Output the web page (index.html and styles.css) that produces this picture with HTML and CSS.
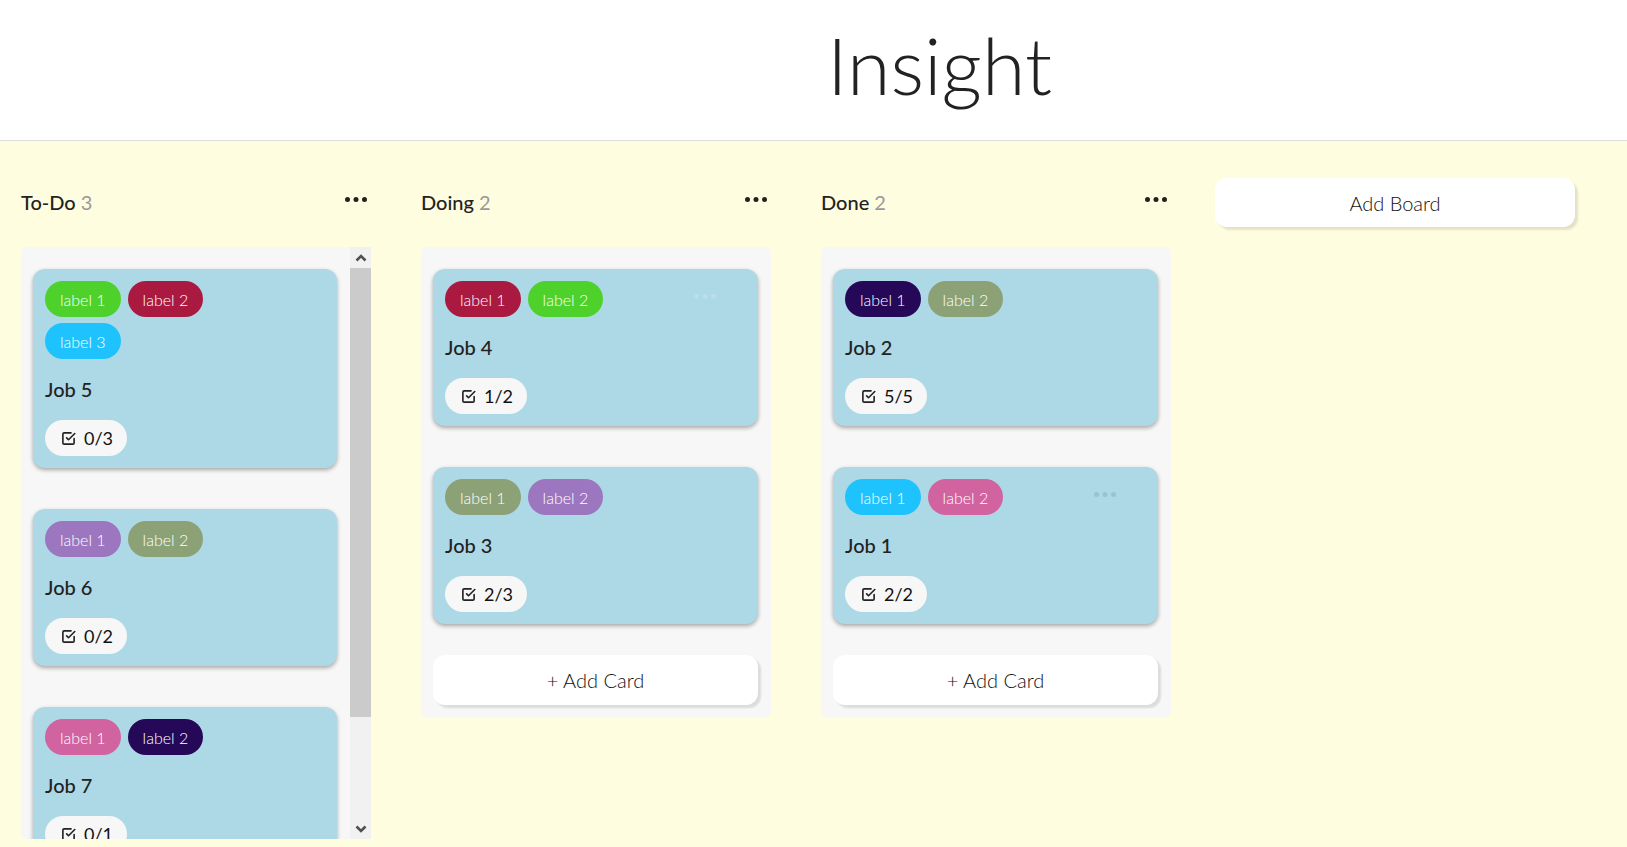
FILE: index.html
```html
<!DOCTYPE html>
<html lang="en">
<head>
<meta charset="utf-8">
<title>Insight</title>
<link rel="stylesheet" href="styles.css">
</head>
<body>
<header class="topbar">
  <h1 class="brand">Insight</h1>
</header>
<main class="board">
  <section class="column">
    <div class="column-head">
      <h2 class="column-title">To-Do <span class="count">3</span></h2>
      <button class="more" aria-label="More"><svg width="22" height="5" viewBox="0 0 22 5"><circle cx="2.5" cy="2.5" r="2.5"/><circle cx="11" cy="2.5" r="2.5"/><circle cx="19.5" cy="2.5" r="2.5"/></svg></button>
    </div>
    <div class="column-body scrolling">
      <div class="scroll-view">
        <div class="cards">
          <article class="card">
            <div class="card-top">
              <div class="labels">
                <span class="label c-green">label 1</span>
                <span class="label c-crimson">label 2</span>
                <span class="label c-sky">label 3</span>
              </div>
              <button class="card-more is-hidden" aria-label="Card menu"><svg width="22" height="5" viewBox="0 0 22 5"><circle cx="2.5" cy="2.5" r="2.5"/><circle cx="11" cy="2.5" r="2.5"/><circle cx="19.5" cy="2.5" r="2.5"/></svg></button>
            </div>
            <h3 class="card-title">Job 5</h3>
            <span class="checklist"><svg class="check-icon" width="15" height="15" viewBox="0 0 24 24"><polyline points="9 11 12 14 22 4"/><path d="M21 12v7a2 2 0 0 1-2 2H5a2 2 0 0 1-2-2V5a2 2 0 0 1 2-2h11"/></svg>0/3</span>
          </article>
          <article class="card">
            <div class="card-top">
              <div class="labels">
                <span class="label c-purple">label 1</span>
                <span class="label c-sage">label 2</span>
              </div>
              <button class="card-more is-hidden" aria-label="Card menu"><svg width="22" height="5" viewBox="0 0 22 5"><circle cx="2.5" cy="2.5" r="2.5"/><circle cx="11" cy="2.5" r="2.5"/><circle cx="19.5" cy="2.5" r="2.5"/></svg></button>
            </div>
            <h3 class="card-title">Job 6</h3>
            <span class="checklist"><svg class="check-icon" width="15" height="15" viewBox="0 0 24 24"><polyline points="9 11 12 14 22 4"/><path d="M21 12v7a2 2 0 0 1-2 2H5a2 2 0 0 1-2-2V5a2 2 0 0 1 2-2h11"/></svg>0/2</span>
          </article>
          <article class="card">
            <div class="card-top">
              <div class="labels">
                <span class="label c-pink">label 1</span>
                <span class="label c-night">label 2</span>
              </div>
              <button class="card-more is-hidden" aria-label="Card menu"><svg width="22" height="5" viewBox="0 0 22 5"><circle cx="2.5" cy="2.5" r="2.5"/><circle cx="11" cy="2.5" r="2.5"/><circle cx="19.5" cy="2.5" r="2.5"/></svg></button>
            </div>
            <h3 class="card-title">Job 7</h3>
            <span class="checklist"><svg class="check-icon" width="15" height="15" viewBox="0 0 24 24"><polyline points="9 11 12 14 22 4"/><path d="M21 12v7a2 2 0 0 1-2 2H5a2 2 0 0 1-2-2V5a2 2 0 0 1 2-2h11"/></svg>0/1</span>
          </article>
        </div>
        <button class="add-card">+ Add Card</button>
      </div>
      <div class="scrollbar" aria-hidden="true">
        <span class="sb-btn"><svg width="12" height="8" viewBox="0 0 12 8"><path d="M1.5 6.5L6 2l4.5 4.5"/></svg></span>
        <span class="sb-track"><span class="sb-thumb"></span></span>
        <span class="sb-btn"><svg width="12" height="8" viewBox="0 0 12 8"><path d="M1.5 1.5L6 6l4.5-4.5"/></svg></span>
      </div>
    </div>
  </section>

  <section class="column">
    <div class="column-head">
      <h2 class="column-title">Doing <span class="count">2</span></h2>
      <button class="more" aria-label="More"><svg width="22" height="5" viewBox="0 0 22 5"><circle cx="2.5" cy="2.5" r="2.5"/><circle cx="11" cy="2.5" r="2.5"/><circle cx="19.5" cy="2.5" r="2.5"/></svg></button>
    </div>
    <div class="column-body">
      <div class="cards">
        <article class="card">
          <div class="card-top">
            <div class="labels">
              <span class="label c-crimson">label 1</span>
              <span class="label c-green">label 2</span>
            </div>
            <button class="card-more is-faint" aria-label="Card menu"><svg width="22" height="5" viewBox="0 0 22 5"><circle cx="2.5" cy="2.5" r="2.5"/><circle cx="11" cy="2.5" r="2.5"/><circle cx="19.5" cy="2.5" r="2.5"/></svg></button>
          </div>
          <h3 class="card-title">Job 4</h3>
          <span class="checklist"><svg class="check-icon" width="15" height="15" viewBox="0 0 24 24"><polyline points="9 11 12 14 22 4"/><path d="M21 12v7a2 2 0 0 1-2 2H5a2 2 0 0 1-2-2V5a2 2 0 0 1 2-2h11"/></svg>1/2</span>
        </article>
        <article class="card">
          <div class="card-top">
            <div class="labels">
              <span class="label c-sage">label 1</span>
              <span class="label c-purple">label 2</span>
            </div>
            <button class="card-more is-hidden" aria-label="Card menu"><svg width="22" height="5" viewBox="0 0 22 5"><circle cx="2.5" cy="2.5" r="2.5"/><circle cx="11" cy="2.5" r="2.5"/><circle cx="19.5" cy="2.5" r="2.5"/></svg></button>
          </div>
          <h3 class="card-title">Job 3</h3>
          <span class="checklist"><svg class="check-icon" width="15" height="15" viewBox="0 0 24 24"><polyline points="9 11 12 14 22 4"/><path d="M21 12v7a2 2 0 0 1-2 2H5a2 2 0 0 1-2-2V5a2 2 0 0 1 2-2h11"/></svg>2/3</span>
        </article>
      </div>
      <button class="add-card">+ Add Card</button>
    </div>
  </section>

  <section class="column">
    <div class="column-head">
      <h2 class="column-title">Done <span class="count">2</span></h2>
      <button class="more" aria-label="More"><svg width="22" height="5" viewBox="0 0 22 5"><circle cx="2.5" cy="2.5" r="2.5"/><circle cx="11" cy="2.5" r="2.5"/><circle cx="19.5" cy="2.5" r="2.5"/></svg></button>
    </div>
    <div class="column-body">
      <div class="cards">
        <article class="card">
          <div class="card-top">
            <div class="labels">
              <span class="label c-night">label 1</span>
              <span class="label c-sage">label 2</span>
            </div>
            <button class="card-more is-hidden" aria-label="Card menu"><svg width="22" height="5" viewBox="0 0 22 5"><circle cx="2.5" cy="2.5" r="2.5"/><circle cx="11" cy="2.5" r="2.5"/><circle cx="19.5" cy="2.5" r="2.5"/></svg></button>
          </div>
          <h3 class="card-title">Job 2</h3>
          <span class="checklist"><svg class="check-icon" width="15" height="15" viewBox="0 0 24 24"><polyline points="9 11 12 14 22 4"/><path d="M21 12v7a2 2 0 0 1-2 2H5a2 2 0 0 1-2-2V5a2 2 0 0 1 2-2h11"/></svg>5/5</span>
        </article>
        <article class="card">
          <div class="card-top">
            <div class="labels">
              <span class="label c-sky">label 1</span>
              <span class="label c-pink">label 2</span>
            </div>
            <button class="card-more is-shown" aria-label="Card menu"><svg width="22" height="5" viewBox="0 0 22 5"><circle cx="2.5" cy="2.5" r="2.5"/><circle cx="11" cy="2.5" r="2.5"/><circle cx="19.5" cy="2.5" r="2.5"/></svg></button>
          </div>
          <h3 class="card-title">Job 1</h3>
          <span class="checklist"><svg class="check-icon" width="15" height="15" viewBox="0 0 24 24"><polyline points="9 11 12 14 22 4"/><path d="M21 12v7a2 2 0 0 1-2 2H5a2 2 0 0 1-2-2V5a2 2 0 0 1 2-2h11"/></svg>2/2</span>
        </article>
      </div>
      <button class="add-card">+ Add Card</button>
    </div>
  </section>

  <div class="add-board-wrap">
    <button class="add-board">Add Board</button>
  </div>
</main>
</body>
</html>
```

FILE: styles.css
```css
* {
  box-sizing: border-box;
}

html,
body {
  margin: 0;
  padding: 0;
  height: 100%;
}

body {
  font-family: "Lato", "Noto Sans", "DejaVu Sans", sans-serif;
  color: #222;
  background: #fffde0;
  overflow: hidden;
}

.topbar {
  height: 141px;
  background: #fff;
  border-bottom: 1px solid #dedede;
}

.brand {
  margin: 0;
  padding: 18px 0 0 252px;
  text-align: center;
  font-weight: 300;
  font-size: 79px;
  line-height: 94px;
  color: #222;
}

.board {
  display: flex;
  align-items: flex-start;
  gap: 50px;
  padding: 37px 21px 0;
  background: #fffde0;
  height: calc(100vh - 141px);
}

.column {
  flex: none;
  width: 350px;
}

.column-head {
  display: flex;
  align-items: center;
  justify-content: space-between;
  height: 48px;
}

.column-title {
  margin: 0;
  font-size: 20px;
  font-weight: 500;
  line-height: 24px;
  color: #222;
}

.count {
  color: #999;
  font-weight: 400;
}

.more {
  display: flex;
  padding: 0;
  margin: 0 4px 6px 0;
  border: 0;
  background: none;
  cursor: pointer;
}

.more svg {
  fill: #222;
}

.column-body {
  margin-top: 21px;
  padding: 22px 13px 12px 12px;
  background: #f7f7f7;
  border-radius: 6px;
}

.column-body.scrolling {
  display: flex;
  height: 592px;
  padding: 0;
  overflow: hidden;
  border-radius: 6px 0 0 6px;
}

.scroll-view {
  flex: 1;
  min-width: 0;
  overflow: hidden;
  padding: 22px 13px 12px 12px;
}

.scrollbar {
  flex: none;
  width: 21px;
  display: flex;
  flex-direction: column;
  background: #f1f1f1;
}

.sb-btn {
  flex: none;
  height: 21px;
  display: flex;
  align-items: center;
  justify-content: center;
}

.sb-btn svg {
  fill: none;
  stroke: #505050;
  stroke-width: 2.6;
}

.sb-track {
  flex: 1;
  display: flex;
  flex-direction: column;
}

.sb-thumb {
  height: 449px;
  background: #cbcbcb;
}

.cards {
  display: flex;
  flex-direction: column;
  gap: 41px;
}

.card {
  background: #add8e6;
  border-radius: 12px;
  padding: 12px;
  box-shadow: 0 2px 4px rgba(0, 0, 0, 0.33);
}

.card-top {
  display: flex;
  align-items: flex-start;
}

.labels {
  flex: 1;
  display: flex;
  flex-wrap: wrap;
  gap: 6px 7px;
}

.label {
  display: inline-flex;
  align-items: center;
  height: 36px;
  padding: 0 15px;
  border-radius: 18px;
  color: #fff;
  font-size: 16px;
  font-weight: 300;
  white-space: nowrap;
}

.c-green { background: #4ed12a; }
.c-crimson { background: #aa1940; }
.c-sky { background: #1ec3fd; }
.c-purple { background: #9c76be; }
.c-sage { background: #8ca176; }
.c-pink { background: #d163a0; }
.c-night { background: #250858; }

.card-more {
  flex: none;
  display: flex;
  width: 52px;
  margin-left: 8px;
  padding: 13px 30px 0 0;
  border: 0;
  background: none;
  cursor: pointer;
}

.card-more.is-hidden svg { fill: transparent; }
.card-more.is-faint svg { fill: rgba(255, 255, 255, 0.16); }
.card-more.is-shown svg { fill: rgba(60, 100, 120, 0.18); }

.card-title {
  margin: 18px 0 19px;
  font-size: 20px;
  font-weight: 500;
  line-height: 24px;
  color: #222;
}

.checklist {
  display: inline-flex;
  align-items: center;
  gap: 8px;
  height: 36px;
  padding: 0 14px 0 16px;
  border-radius: 18px;
  background: #f7f7f7;
  font-size: 18px;
  font-weight: 400;
  color: #111;
}

.check-icon {
  fill: none;
  stroke: #222;
  stroke-width: 2.6;
  stroke-linecap: round;
  stroke-linejoin: round;
}

.add-card {
  display: block;
  width: 100%;
  height: 50px;
  margin-top: 31px;
  border: 0;
  border-radius: 12px;
  background: #fff;
  box-shadow: 3px 3px 2px rgba(0, 0, 0, 0.11);
  font-family: inherit;
  font-size: 20px;
  font-weight: 300;
  color: #111;
  cursor: pointer;
}

.add-board-wrap {
  flex: none;
  margin-left: -6px;
}

.add-board {
  width: 360px;
  height: 49px;
  border: 0;
  border-radius: 12px;
  background: #fff;
  box-shadow: 3px 3px 2px rgba(0, 0, 0, 0.11);
  font-family: inherit;
  font-size: 20px;
  font-weight: 300;
  color: #111;
  cursor: pointer;
}
```
